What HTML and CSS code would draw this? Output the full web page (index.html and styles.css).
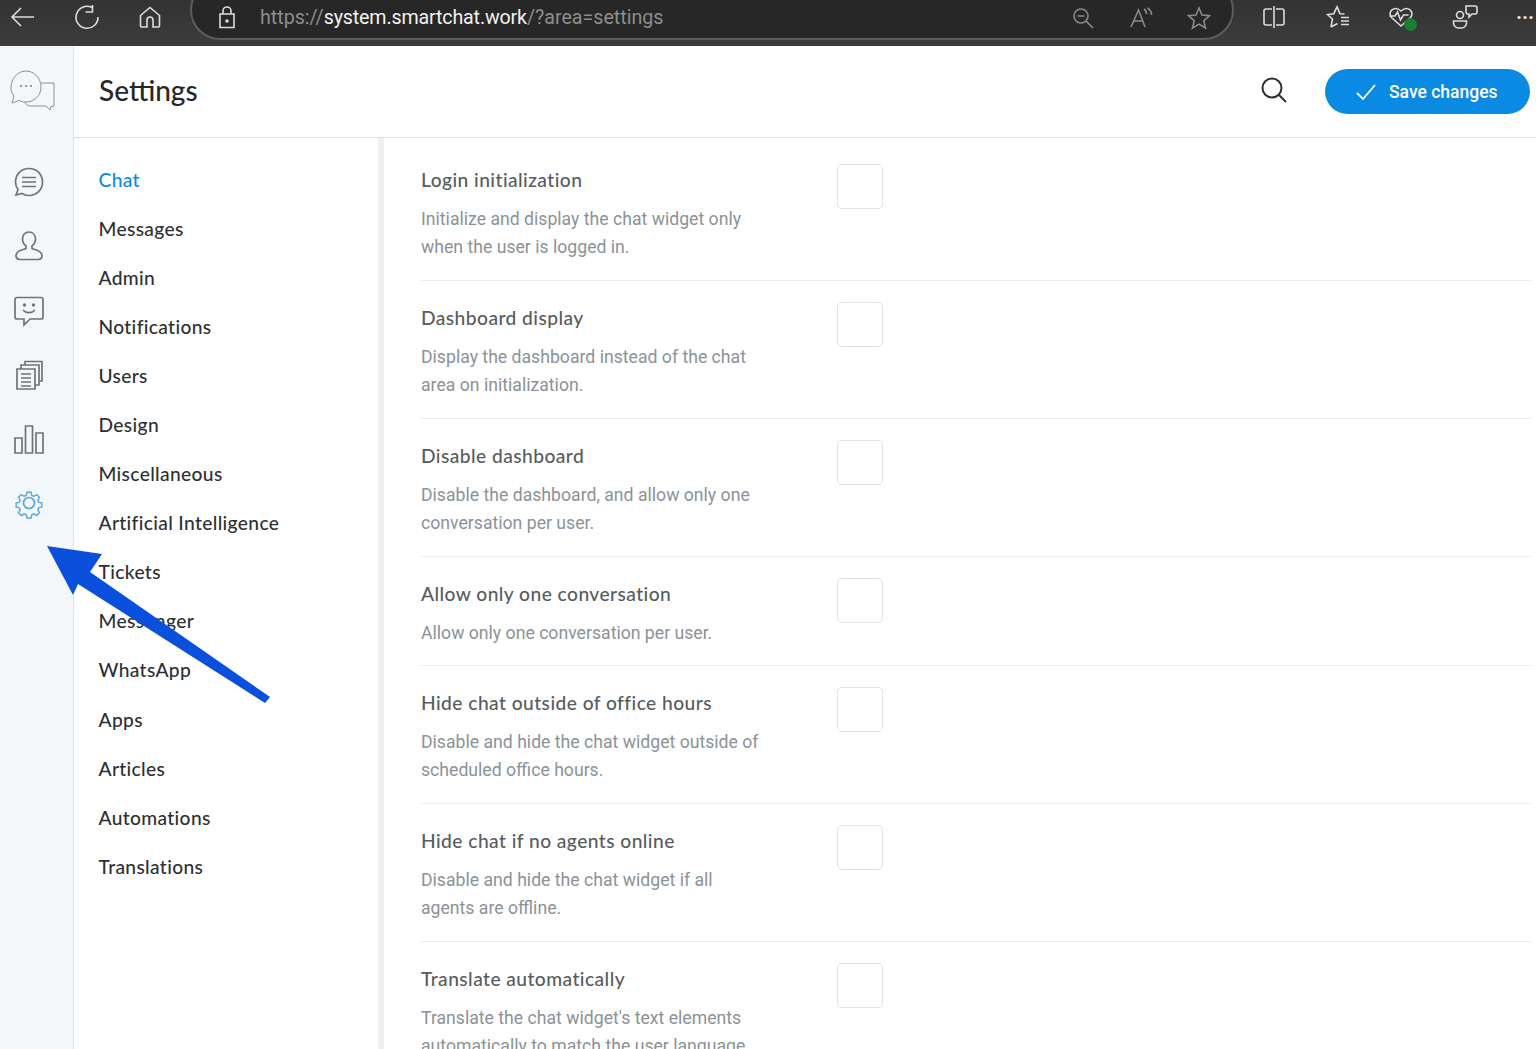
FILE: index.html
```html
<!DOCTYPE html>
<html lang="en">
<head>
<meta charset="utf-8">
<title>Settings</title>
<link rel="stylesheet" href="styles.css">
</head>
<body>
<div class="page">
  <div class="browser">
    <div class="nav-icons">
      <svg class="bi bi-back" width="26" height="24" viewBox="0 0 26 24"><path d="M24 12H2M11 3l-9 9 9 9"/></svg>
      <svg class="bi bi-reload" width="28" height="28" viewBox="0 0 28 28"><path d="M19 4.500A11 11 0 1 0 25 14M19.500 2v7H12.500"/></svg>
      <svg class="bi bi-home" width="24" height="24" viewBox="0 0 24 24"><path d="M2.500 10.500 12 2.500l9.500 8V21a1 1 0 0 1-1 1H15v-7a3 3 0 0 0-6 0v7H3.500a1 1 0 0 1-1-1z"/></svg>
    </div>
    <div class="address">
      <svg class="bi bi-lock" width="18" height="24" viewBox="0 0 18 24"><path d="M5 8V5a4 4 0 0 1 8 0v3M2 8h14v13.500H2z"/><circle cx="9" cy="15" r="1" fill="#ddd"/></svg>
      <span class="url"><span class="url-dim">https://</span><span class="url-host">system.smartchat.work</span><span class="url-dim">/?area=settings</span></span>
      <div class="address-end">
        <svg class="bi dim" width="22" height="22" viewBox="0 0 22 22"><circle cx="9" cy="9" r="7"/><path d="M5.500 9h7M14 14l7 7"/></svg>
        <svg class="bi dim" width="24" height="22" viewBox="0 0 24 22"><path d="M2 20 9.500 3 16 20M4.500 14h9.500M15 2c1.500 1 2.500 3 2.500 5M18.500 1c2.500 1.500 4 4 4 7"/></svg>
        <svg class="bi dim" width="24" height="24" viewBox="0 0 24 24"><path d="m12 2 3 7 7.500.7-5.700 5 1.700 7.300-6.500-3.900L5.500 22l1.700-7.300-5.700-5L9 9z"/></svg>
      </div>
    </div>
    <div class="tools">
      <svg class="bi" width="22" height="24" viewBox="0 0 22 24"><path d="M9 4H3a2 2 0 0 0-2 2v12a2 2 0 0 0 2 2h6M13 4h6a2 2 0 0 1 2 2v12a2 2 0 0 1-2 2h-6M11 1v22"/></svg>
      <svg class="bi bi-fav" width="24" height="24" viewBox="0 0 24 24"><path d="M5 22 6.500 14 1.500 9.500l6.300-.8L11 2l3 6.700 4.500.3M5 22l6.500-3.500M15 12.500h8M15 16h8M15 19.500h8"/></svg>
      <span class="heart-wrap">
        <svg class="bi" width="26" height="24" viewBox="0 0 26 24"><path d="M13 21 3.500 12.500C-1 7 6 0 13 6c7-6 14 1 9.500 6.500L13 21zM1.500 11H7l2.500-4 3 8 3-5h5"/></svg>
        <span class="heart-dot"></span>
      </span>
      <svg class="bi" width="26" height="26" viewBox="0 0 26 26"><circle cx="8" cy="11" r="3.500"/><path d="M1.500 17h13v2a5 5 0 0 1-5 5h-3a5 5 0 0 1-5-5zM14 2h9a2 2 0 0 1 2 2v4a2 2 0 0 1-2 2h-3l-3 3v-3h-1a2 2 0 0 1-2-2z"/></svg>
      <span class="dots">···</span>
    </div>
  </div>

  <div class="app">
    <aside class="rail">
      <svg class="logo" width="48" height="42" viewBox="0 0 48 42"><g fill="none" stroke="#8f8f8f" stroke-width="1"><path d="M2 19C2 9 9 2 17 2s15 7 15 16-7 15-15 15c-3 0-5-.5-7-1.500L3 34l2-7c-2-2.500-3-5-3-8z"/><path d="M32 14h13v23l-3 .5-1 3.500-4-4H22c-3 0-5-1-6-4"/></g><g fill="#777"><circle cx="12" cy="17" r="1"/><circle cx="17" cy="17" r="1"/><circle cx="22" cy="17" r="1"/></g></svg>
      <nav class="rail-nav">
        <svg class="ri" width="32" height="32" viewBox="0 0 32 32"><path d="M16 2.500c7.700 0 13.500 5.800 13.500 13.500S23.700 29.500 16 29.500c-2.700 0-5-.7-7-2l-6 1.500 2-5.500C3.500 21.300 2.500 18.800 2.500 16 2.500 8.300 8.300 2.500 16 2.500zM9 11.500h14M9 16h14M9 20.500h14"/></svg>
        <svg class="ri" width="32" height="32" viewBox="0 0 32 32"><path d="M16 2c4 0 6.500 3 6.500 7 0 3-1.500 5.500-3.500 7v2.500c3 1.500 10 2 10 7 0 2.500-1.500 4-4 4H7c-2.500 0-4-1.500-4-4 0-5 7-5.500 10-7V16c-2-1.500-3.500-4-3.500-7 0-4 2.500-7 6.500-7z"/></svg>
        <svg class="ri" width="32" height="32" viewBox="0 0 32 32"><path d="M4 2.500h24a2 2 0 0 1 2 2V22a2 2 0 0 1-2 2H17l-6 6v-6H4a2 2 0 0 1-2-2V4.500a2 2 0 0 1 2-2zM10 15c3 3.500 9 3.500 12 0"/><circle cx="11.500" cy="10" r=".8"/><circle cx="20.500" cy="10" r=".8"/></svg>
        <svg class="ri" width="32" height="32" viewBox="0 0 32 32"><path d="M4 10h18v20H4zM8 15h10M8 19h10M8 23h10M8 27h10M8 10V6h18v20h-4M12 6V2.500h17V22h-3"/></svg>
        <svg class="ri" width="32" height="32" viewBox="0 0 32 32"><path d="M2 15h7v15H2zM12.500 3h7v27h-7zM23 10h7v20h-7z"/></svg>
        <svg class="ri ri-active" width="32" height="32" viewBox="0 0 32 32"><circle cx="16" cy="16" r="5.500"/><path d="M13.500 2.500h5l1 4 2.600 1.100 3.500-2.100 3.500 3.500-2.100 3.500 1.100 2.600 4 1v5l-4 1-1.100 2.600 2.100 3.500-3.500 3.500-3.500-2.100-2.600 1.100-1 4h-5l-1-4-2.600-1.100-3.500 2.100-3.500-3.500 2.100-3.500-1.100-2.600-4-1v-5l4-1 1.100-2.600-2.100-3.500 3.500-3.500 3.500 2.100 2.600-1.100z" transform="translate(3.200 3.200) scale(.8)"/></svg>
      </nav>
    </aside>

    <main class="main">
      <header class="head">
        <h1 class="title">Settings</h1>
        <svg class="search" width="26" height="26" viewBox="0 0 26 26"><circle cx="11" cy="11" r="9.500"/><path d="m18 18 7 7"/></svg>
        <button class="save" type="button">
          <svg width="20" height="16" viewBox="0 0 20 16"><path d="M1 9l6 6L19 1"/></svg>
          <span>Save changes</span>
        </button>
      </header>

      <div class="cols">
        <ul class="menu">
          <li class="menu-active">Chat</li>
          <li>Messages</li>
          <li>Admin</li>
          <li>Notifications</li>
          <li>Users</li>
          <li>Design</li>
          <li>Miscellaneous</li>
          <li>Artificial Intelligence</li>
          <li>Tickets</li>
          <li>Messenger</li>
          <li>WhatsApp</li>
          <li>Apps</li>
          <li>Articles</li>
          <li>Automations</li>
          <li>Translations</li>
        </ul>
        <section class="content">
          <div class="row">
            <div class="row-text"><h2>Login initialization</h2><p>Initialize and display the chat widget only when the user is logged in.</p></div>
            <span class="check"></span>
          </div>
          <div class="row">
            <div class="row-text"><h2>Dashboard display</h2><p>Display the dashboard instead of the chat area on initialization.</p></div>
            <span class="check"></span>
          </div>
          <div class="row">
            <div class="row-text"><h2>Disable dashboard</h2><p>Disable the dashboard, and allow only one conversation per user.</p></div>
            <span class="check"></span>
          </div>
          <div class="row row-single">
            <div class="row-text"><h2>Allow only one conversation</h2><p>Allow only one conversation per user.</p></div>
            <span class="check"></span>
          </div>
          <div class="row">
            <div class="row-text"><h2>Hide chat outside of office hours</h2><p>Disable and hide the chat widget outside of scheduled office hours.</p></div>
            <span class="check"></span>
          </div>
          <div class="row">
            <div class="row-text"><h2>Hide chat if no agents online</h2><p>Disable and hide the chat widget if all agents are offline.</p></div>
            <span class="check"></span>
          </div>
          <div class="row">
            <div class="row-text"><h2>Translate automatically</h2><p>Translate the chat widget's text elements automatically to match the user language.</p></div>
            <span class="check"></span>
          </div>
        </section>
      </div>
    </main>
  </div>

  <svg class="arrow" width="240" height="170" viewBox="0 0 240 170"><path d="M7 6 62 14 50 32 230 157 225 163 38 44 33 55z" fill="#0a50dc"/></svg>
</div>
</body>
</html>
```
FILE: styles.css
```css
* { box-sizing: border-box; }
html, body { margin: 0; padding: 0; height: 100%; overflow: hidden; background: #fff; }
body { font-family: Roboto, "Liberation Sans", sans-serif; }
.page { position: relative; width: 1536px; height: 1049px; overflow: hidden; display: flex; flex-direction: column; }

.browser { flex: 0 0 46px; height: 46px; padding-bottom: 12px; background: linear-gradient(#333333, #3c3c3c); display: flex; align-items: center; overflow: hidden; }
.bi { fill: none; stroke: #dcdcdc; stroke-width: 1.6; flex: none; }
.bi.dim { stroke: #8a8a8a; }
.nav-icons { width: 190px; flex: none; display: flex; align-items: center; padding-left: 10px; }
.bi-reload { margin-left: 37px; }
.bi-home { margin-left: 37px; }
.address { width: 1044px; height: 60px; align-self: flex-start; margin-top: -20px; flex: none; display: flex; align-items: center; padding: 15px 21px 0 26px; border: 2px solid #5c5c5c; border-radius: 30px; background: #272727; }
.url { margin-left: 24px; font-size: 19.650px; color: #8e8e8e; white-space: nowrap; }
.url-host { color: #f2f2f2; letter-spacing: -.15px; }
.address-end { margin-left: auto; display: flex; align-items: center; gap: 34.500px; }
.tools { flex: 1; display: flex; align-items: center; padding-left: 29px; gap: 38px; }
.bi-fav { margin-left: 3px; }
.heart-wrap { position: relative; display: flex; }
.heart-dot { position: absolute; right: -3px; bottom: -2px; width: 13px; height: 13px; border-radius: 50%; background: #1a7d32; }
.dots { color: #e4e4e4; font-size: 20px; font-weight: 700; line-height: 24px; white-space: nowrap; }

.app { flex: 1; min-height: 0; display: flex; }
.rail { flex: 0 0 74px; background: #f4f7f9; border-right: 1px solid #dfe3e6; display: flex; flex-direction: column; }
.logo { margin: 23px 0 0 9px; }
.rail-nav { display: flex; flex-direction: column; align-items: center; gap: 32.300px; padding: 55px 16px 0 0; }
.ri { fill: none; stroke: #6f7478; stroke-width: 1.700; flex: none; }
.ri-active { stroke: #4fa6dd; }

.main { flex: 1; min-width: 0; display: flex; flex-direction: column; }
.head { flex: 0 0 92px; border-bottom: 1px solid #dcdfe2; display: flex; align-items: center; padding: 0 6px 0 25px; }
.title { margin: 0 0 4px; font-family: Lato, sans-serif; font-size: 28px; font-weight: 500; color: #25282b; }
.search { margin: 0 38px 4px auto; fill: none; stroke: #2c2f32; stroke-width: 2; }
.save { width: 205px; height: 45px; border: 0; border-radius: 23px; background: #0a8ae2; color: #fff; display: flex; align-items: center; padding: 0 0 0 31px; gap: 13px; font-family: Roboto, sans-serif; font-size: 17.500px; font-weight: 500; }
.save svg { fill: none; stroke: #fff; stroke-width: 1.800; flex: none; }

.cols { flex: 1; min-height: 0; display: flex; }
.menu { list-style: none; margin: 0; flex: 0 0 304px; padding: 16.500px 0 0 24.500px; font-family: Lato, sans-serif; font-size: 19.200px; font-weight: 500; letter-spacing: .35px; color: #2d3033; }
.menu li { height: 49.100px; line-height: 49.100px; white-space: nowrap; }
.menu .menu-active { color: #0a8ae2; }
.content { flex: 1; min-width: 0; border-left: 6px solid #efefef; padding: 5px 5px 0 37px; }
.row { display: flex; padding: 21px 0 19px; border-bottom: 1px solid #e8ebed; }
.row-single { padding-bottom: 18px; }
.row-text { flex: 0 0 416px; }
.row-text h2 { margin: 0 0 9px; font-family: Lato, sans-serif; font-size: 19.200px; line-height: 32px; font-weight: 500; letter-spacing: .45px; color: #565c61; }
.row-text p { margin: 0; width: 342px; font-size: 17.650px; line-height: 28px; color: #8b9298; }
.check { flex: none; width: 46px; height: 45px; border: 1.500px solid #e0e3e6; border-radius: 5px; background: #fff; }

.arrow { position: absolute; left: 40px; top: 540px; }
```
